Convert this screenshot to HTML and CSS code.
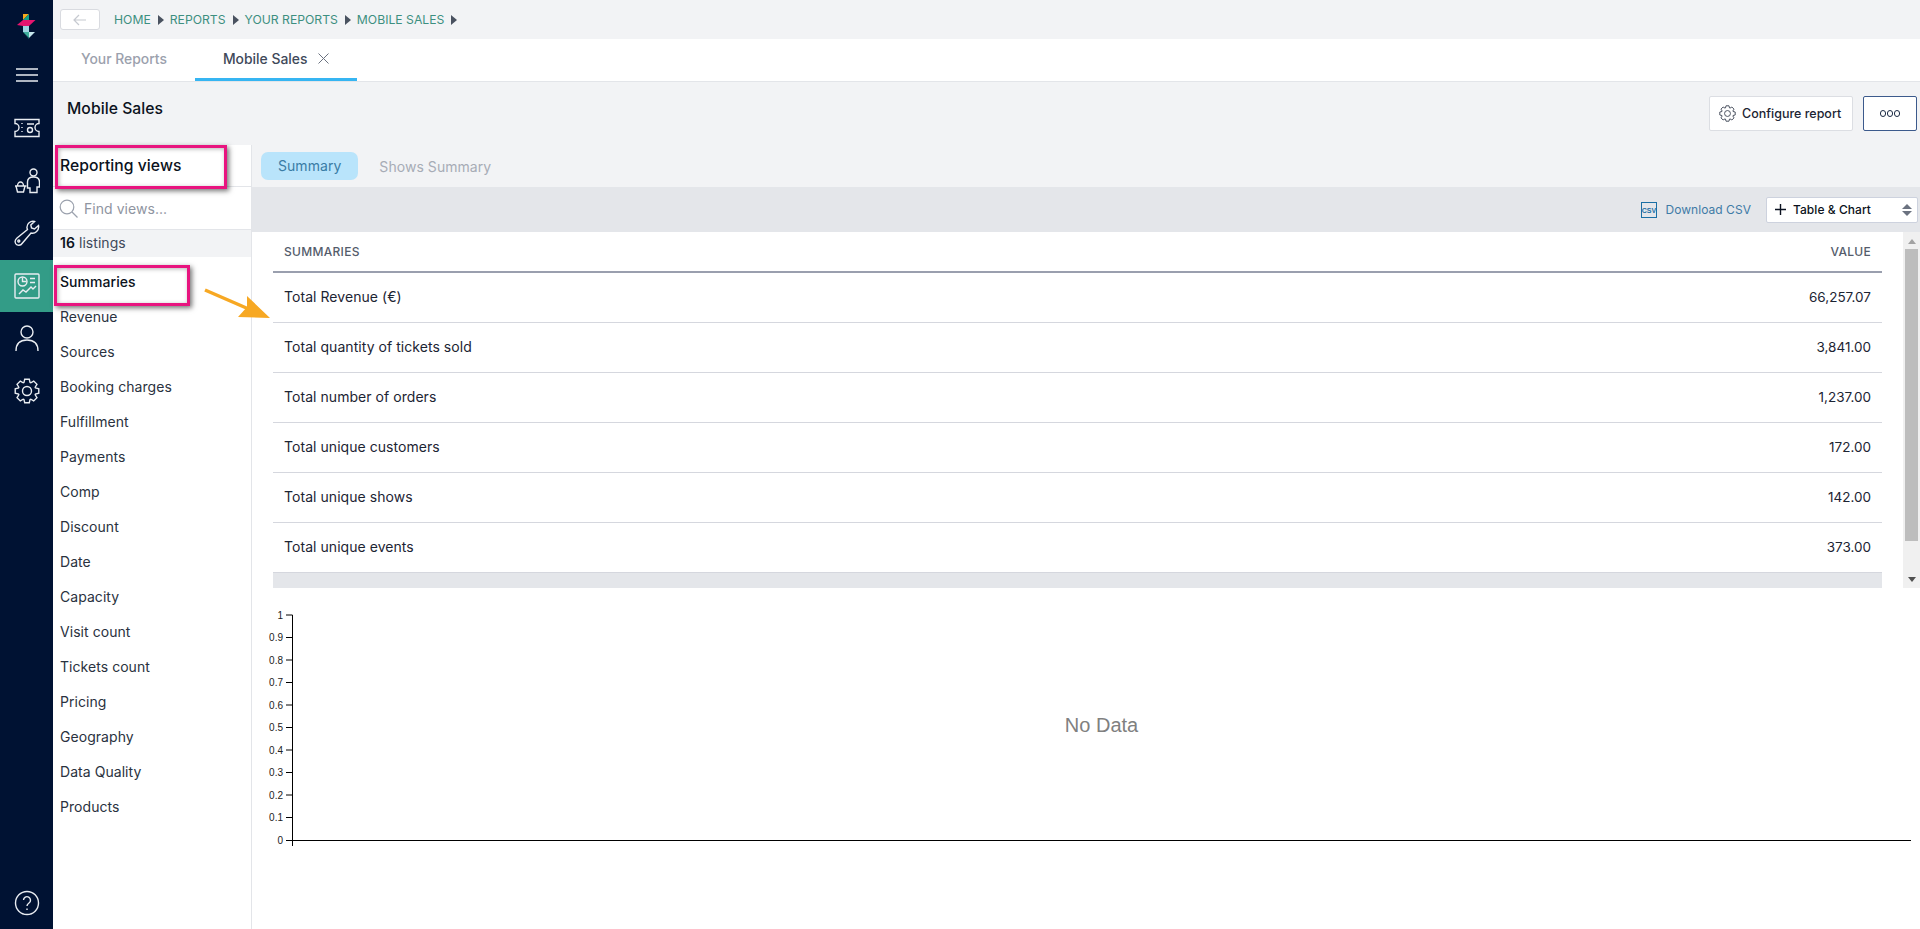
FILE: index.html
```html
<!DOCTYPE html>
<html lang="en">
<head>
<meta charset="utf-8">
<title>Mobile Sales</title>
<link rel="stylesheet" href="styles.css">
</head>
<body>
<div class="app">
  <nav class="rail">
    <div class="rail-logo">
      <svg width="19" height="25" viewBox="0 0 19 25">
        <polygon points="6,0 12,0 6,6" fill="#f7a81b"/><polygon points="12,0 12,6 6,6" fill="#10a08a"/>
        <polygon points="6,6 18.500,6 12,12 6,12" fill="#e6146f"/>
        <polygon points="0,11 6,6 6,12" fill="#e6146f"/>
        <polygon points="6,12 12,12 6,15" fill="#f06a55"/>
        <polygon points="6,12 12,12 12,18 6,18" fill="#9fd4e2"/>
        <polygon points="6,18 12,18 12,24 6,18" fill="#3fae9c"/>
        <polygon points="12,18 18,18 12,24" fill="#c4e6ec"/>
        <polygon points="6,18 12,24 12,25" fill="#1c7f7c"/>
      </svg>
    </div>
    <div class="rail-item">
      <svg width="24" height="16" viewBox="0 0 24 16" class="ic"><path d="M1 2h22M1 8h22M1 14h22"/></svg>
    </div>
    <div class="rail-item">
      <svg width="26" height="20" viewBox="0 0 26 20" class="ic"><path d="M1 1.500h24v4a4 4 0 0 0 0 8v5H1v-5a4 4 0 0 0 0-8z"/><path d="M8 5v1M8 9v1M8 13v1M13 6h7"/><circle cx="16" cy="12" r="2.500"/></svg>
    </div>
    <div class="rail-item">
      <svg width="26" height="26" viewBox="0 0 26 26" class="ic"><circle cx="19.500" cy="4.500" r="3.500"/><path d="M13.500 20v-6c0-3.500 2.500-5 6-5s6 1.500 6 5v5h-2.500v5.500h-7V20z"/><path d="M1 18h11.500M2 18l1.500 6h6l1.500-6"/><path d="M3.500 18a3 4 0 0 1 6 0"/></svg>
    </div>
    <div class="rail-item">
      <svg width="26" height="26" viewBox="0 0 26 26" class="ic"><path d="M24.500 5.500L20.500 9l-3-1-.7-3 3.700-3.500C16.500.5 12.500 3.500 13 8l.5 1.500L3 18c-3 2.500-2 6 0 6.800 2.500 1 4.500-.3 5.500-1.800L17 13c4 1 8.500-2.500 7.500-7.500z"/><circle cx="4.800" cy="21" r="1"/></svg>
    </div>
    <div class="rail-item rail-active">
      <svg width="26" height="26" viewBox="0 0 26 26" class="ic"><rect x="1" y="1" width="24" height="24" rx="1"/><circle cx="8.500" cy="8.500" r="4.500"/><path d="M8.500 4.500v4h4M16 5.500h5M16 9.500h5M5 21l4-4 3 2 5-5 2 2 3-3"/></svg>
    </div>
    <div class="rail-item">
      <svg width="24" height="27" viewBox="0 0 24 27" class="ic"><circle cx="12" cy="7" r="6"/><path d="M1 26c0-8 5-11 11-11s11 3 11 11"/></svg>
    </div>
    <div class="rail-item">
      <svg width="26" height="26" viewBox="0 0 26 26" class="ic"><polygon points="21.46,9.92 24.78,10.71 24.78,15.29 21.46,16.08 21.16,16.8 22.95,19.71 19.71,22.95 16.8,21.16 16.08,21.46 15.29,24.78 10.71,24.78 9.92,21.46 9.2,21.16 6.29,22.95 3.05,19.71 4.84,16.8 4.54,16.08 1.22,15.29 1.22,10.71 4.54,9.92 4.84,9.2 3.05,6.29 6.29,3.05 9.2,4.84 9.92,4.54 10.71,1.22 15.29,1.22 16.08,4.54 16.8,4.84 19.71,3.05 22.95,6.29 21.16,9.2"/><circle cx="13" cy="13" r="4.500"/></svg>
    </div>
    <div class="rail-item rail-help">
      <svg width="26" height="26" viewBox="0 0 26 26" class="ic"><circle cx="13" cy="13" r="11.500"/><path d="M9.500 10a3.500 3.500 0 1 1 5.500 3c-1.300.9-2 1.500-2 3"/><path d="M13 18.500v1.500"/></svg>
    </div>
  </nav>

  <div class="main">
    <header class="crumbs">
      <button class="back" aria-label="Back">
        <svg width="14" height="12" viewBox="0 0 14 12"><path d="M13 6H1M6 1L1 6l5 5"/></svg>
      </button>
      <span class="crumb">HOME</span><i class="tri"></i>
      <span class="crumb">REPORTS</span><i class="tri"></i>
      <span class="crumb">YOUR REPORTS</span><i class="tri"></i>
      <span class="crumb">MOBILE SALES</span><i class="tri"></i>
    </header>

    <div class="tabs">
      <div class="tab">Your Reports</div>
      <div class="tab tab-on">Mobile Sales
        <svg width="11" height="11" viewBox="0 0 11 11" class="tab-x"><path d="M.5.5l10 10M10.500.5l-10 10"/></svg>
      </div>
    </div>

    <div class="titlebar">
      <h1 class="title">Mobile Sales</h1>
      <div class="actions">
        <button class="btn-config">
          <svg width="17" height="17" viewBox="0 0 26 26" class="gear"><polygon points="21.46,9.92 24.78,10.71 24.78,15.29 21.46,16.08 21.16,16.8 22.95,19.71 19.71,22.95 16.8,21.16 16.08,21.46 15.29,24.78 10.71,24.78 9.92,21.46 9.2,21.16 6.29,22.95 3.05,19.71 4.84,16.8 4.54,16.08 1.22,15.29 1.22,10.71 4.54,9.92 4.84,9.2 3.05,6.29 6.29,3.05 9.2,4.84 9.92,4.54 10.71,1.22 15.29,1.22 16.08,4.54 16.8,4.84 19.71,3.05 22.95,6.29 21.16,9.2"/><circle cx="13" cy="13" r="4.500"/></svg>
          Configure report
        </button>
        <button class="btn-more">
          <span class="dot"></span><span class="dot"></span><span class="dot"></span>
        </button>
      </div>
    </div>

    <div class="body">
      <aside class="views">
        <div class="views-head">Reporting views</div>
        <div class="views-search">
          <svg width="19" height="19" viewBox="0 0 19 19"><circle cx="8" cy="8" r="6.800"/><path d="M13 13l5.500 5.500"/></svg>
          <span>Find views...</span>
        </div>
        <div class="views-count"><b>16</b> listings</div>
        <ul class="views-list">
          <li class="on">Summaries</li>
          <li>Revenue</li>
          <li>Sources</li>
          <li>Booking charges</li>
          <li>Fulfillment</li>
          <li>Payments</li>
          <li>Comp</li>
          <li>Discount</li>
          <li>Date</li>
          <li>Capacity</li>
          <li>Visit count</li>
          <li>Tickets count</li>
          <li>Pricing</li>
          <li>Geography</li>
          <li>Data Quality</li>
          <li>Products</li>
        </ul>
      </aside>

      <section class="report">
        <div class="subtabs">
          <span class="pill">Summary</span>
          <span class="pill-off">Shows Summary</span>
        </div>
        <div class="toolbar">
          <a class="csv">
            <svg width="16" height="16" viewBox="0 0 16 16" class="csv-ic"><rect x=".5" y=".5" width="15" height="15"/><text x="8" y="11" text-anchor="middle" class="csv-t">CSV</text></svg>
            Download CSV
          </a>
          <div class="select">
            <svg width="11" height="11" viewBox="0 0 11 11" class="plus"><path d="M5.500 0v11M0 5.500h11"/></svg>
            <span class="select-t">Table &amp; Chart</span>
            <span class="updown"><i class="up"></i><i class="down"></i></span>
          </div>
        </div>

        <div class="tablewrap">
          <div class="tablecol">
            <table class="sum">
              <thead><tr><th>SUMMARIES</th><th class="num">VALUE</th></tr></thead>
              <tbody>
                <tr><td>Total Revenue (€)</td><td class="num">66,257.07</td></tr>
                <tr><td>Total quantity of tickets sold</td><td class="num">3,841.00</td></tr>
                <tr><td>Total number of orders</td><td class="num">1,237.00</td></tr>
                <tr><td>Total unique customers</td><td class="num">172.00</td></tr>
                <tr><td>Total unique shows</td><td class="num">142.00</td></tr>
                <tr><td>Total unique events</td><td class="num">373.00</td></tr>
              </tbody>
            </table>
            <div class="hscroll"></div>
          </div>
          <div class="vscroll">
            <i class="vs-up"></i>
            <div class="vs-thumb"></div>
            <i class="vs-down"></i>
          </div>
        </div>

        <svg class="chart" width="1668" height="258" viewBox="0 0 1668 258">
          <g class="axis">
            <path d="M40.500 25v231M34 25h6.500"/>
            <path d="M34 47.500h6M34 70h6M34 92.500h6M34 115h6M34 137.500h6M34 160h6M34 182.500h6M34 205h6M34 227.500h6"/>
            <path d="M34 250.500h1625"/>
          </g>
          <g class="ticks">
            <text x="31" y="28.500">1</text>
            <text x="31" y="51">0.9</text>
            <text x="31" y="73.500">0.8</text>
            <text x="31" y="96">0.7</text>
            <text x="31" y="118.500">0.6</text>
            <text x="31" y="141">0.5</text>
            <text x="31" y="163.500">0.4</text>
            <text x="31" y="186">0.3</text>
            <text x="31" y="208.500">0.2</text>
            <text x="31" y="231">0.1</text>
            <text x="31" y="253.500">0</text>
          </g>
        </svg>
        <div class="nodata">No Data</div>
      </section>
    </div>
  </div>
</div>

<div class="mark mark-a"></div>
<div class="mark mark-b"></div>
<svg class="arrow" width="70" height="36" viewBox="0 0 70 36"><path d="M2 2L48 22" class="arrow-line"/><polygon points="67,30 35,29 44,19 44,8" class="arrow-head"/></svg>
</body>
</html>
```
FILE: styles.css
```css
* { box-sizing: border-box; }
html, body { margin: 0; height: 100%; overflow: hidden; }
body { font-family: "Inter", "Liberation Sans", sans-serif; color: #1c2433; background: #fff; font-size: 14px; letter-spacing: .05px; position: relative; }
.app { display: flex; height: 929px; }

.rail { width: 53px; flex: none; background: #001233; display: flex; flex-direction: column; }
.rail-logo { height: 49px; display: flex; align-items: flex-start; justify-content: center; padding-top: 14px; }
.rail-item { height: 52.700px; display: flex; align-items: center; justify-content: center; }
.rail-active { background: #339c87; }
.rail-help { margin-top: auto; }
.ic { fill: none; stroke: #e9edf2; stroke-width: 1.400; }

.main { flex: 1; min-width: 0; display: flex; flex-direction: column; background: #f2f3f5; }

.crumbs { height: 39px; flex: none; display: flex; align-items: center; padding-left: 7px; font-size: 12.200px; letter-spacing: 0; }
.back { width: 40px; height: 21px; background: #fff; border: 1px solid #d9dbe0; border-radius: 3px; margin-right: 14px; padding: 0; display: flex; align-items: center; justify-content: center; }
.back svg { fill: none; stroke: #c6c9d0; stroke-width: 1.200; }
.crumb { color: #3d8f80; }
.tri { width: 0; height: 0; border-left: 6px solid #4a5260; border-top: 5px solid transparent; border-bottom: 5px solid transparent; margin: 0 6px 0 7px; }

.tabs { height: 43px; flex: none; background: #fff; border-bottom: 1px solid #e3e5e9; display: flex; letter-spacing: 0; font-size: 13.900px; }
.tab { padding: 0 28px; line-height: 41px; color: #9ba1ad; font-weight: 500; height: 42px; }
.tab-on { color: #40495a; border-bottom: 3px solid #36b5f2; }
.tab-x { margin-left: 7px; fill: none; stroke: #6b7280; stroke-width: 1; }

.titlebar { height: 63px; flex: none; display: flex; justify-content: space-between; padding: 14px 3px 0 14px; }
.title { margin: 2px 0 0; font-size: 15.700px; font-weight: 500; color: #0b1220; line-height: 22px; }
.actions { display: flex; gap: 10px; align-items: flex-start; }
.btn-config { width: 144px; height: 35px; background: #fff; border: 1px solid #dcdee3; border-radius: 2px; display: flex; align-items: center; gap: 6px; padding: 0 0 0 9px; font: 500 12.500px "Inter", sans-serif; color: #1c2433; }
.gear { fill: none; stroke: #4a5260; stroke-width: 1.500; }
.btn-more { width: 54px; height: 35px; background: #fff; border: 1px solid #3c5a8c; border-radius: 2px; display: flex; align-items: center; justify-content: center; gap: .5px; padding: 0; }
.dot { width: 6.500px; height: 6.500px; border: 1.500px solid #1c2b45; border-radius: 50%; }

.body { flex: 1; min-height: 0; display: flex; }
.views { width: 199px; flex: none; background: #fff; border-right: 1px solid #e3e5e9; }
.views-head { height: 42px; border-bottom: 1px solid #e3e5e9; padding: 0 7px; line-height: 41px; font-size: 15.700px; font-weight: 500; color: #0b1220; }
.views-search { height: 42px; display: flex; align-items: center; gap: 6px; padding-left: 6px; color: #8f95a1; }
.views-search svg { fill: none; stroke: #9ba1ad; stroke-width: 1.200; }
.views-count { height: 28px; background: #f2f3f5; border-top: 1px solid #e3e5e9; line-height: 26px; padding-left: 7px; color: #40495a; }
.views-count b { font-weight: 600; color: #0b1220; }
.views-list { list-style: none; margin: 0; padding: 7px 0 0; }
.views-list li { height: 35px; line-height: 35px; padding-left: 7px; color: #2a3240; }
.views-list li.on { color: #0b1220; font-weight: 500; }

.report { flex: 1; min-width: 0; background: #fff; display: flex; flex-direction: column; position: relative; }
.subtabs { height: 42px; flex: none; background: #f2f3f5; display: flex; align-items: center; padding-left: 9px; gap: 21px; }
.pill { background: #b9e4fb; color: #3a7ca5; height: 28px; line-height: 28px; padding: 0 17px; border-radius: 7px; }
.pill-off { color: #a7acb6; }
.toolbar { height: 45px; flex: none; background: #e4e6ea; display: flex; align-items: center; justify-content: flex-end; padding-right: 2px; gap: 15px; }
.csv { display: flex; align-items: center; gap: 8px; color: #3f7ba6; font-size: 12px; }
.csv-ic { fill: none; stroke: #1a6fa5; }
.csv-t { font: 700 7px "Liberation Sans", sans-serif; fill: #1a6fa5; stroke: none; letter-spacing: 0; }
.select { width: 152px; height: 26px; background: #fff; border: 1px solid #cdd2de; border-radius: 2px; display: flex; align-items: center; padding: 0 5px 0 8px; }
.plus { stroke: #0b1220; stroke-width: 1.400; fill: none; margin-right: 7px; }
.select-t { font-size: 12px; font-weight: 500; color: #0b1220; flex: 1; }
.updown { display: flex; flex-direction: column; gap: 2px; }
.up { width: 0; height: 0; border-left: 5px solid transparent; border-right: 5px solid transparent; border-bottom: 5px solid #6b7280; }
.down { width: 0; height: 0; border-left: 5px solid transparent; border-right: 5px solid transparent; border-top: 5px solid #6b7280; }

.tablewrap { height: 356px; flex: none; display: flex; padding-left: 21px; }
.tablecol { width: 1609px; flex: none; display: flex; flex-direction: column; }
.sum { width: 100%; border-collapse: collapse; }
.sum th { height: 40px; text-align: left; font-size: 12px; font-weight: 500; color: #545c6b; padding: 0 11px; border-bottom: 2px solid #9a9fae; letter-spacing: .3px; }
.sum td { height: 50px; padding: 0 11px 1px; border-bottom: 1px solid #d5d7de; color: #1c2433; }
.sum .num { text-align: right; }
.sum td.num { font-size: 13.500px; letter-spacing: 0; }
.hscroll { height: 15px; margin-top: auto; background: #e4e6ea; }
.vscroll { width: 17px; margin-left: 21px; background: #f0f0f0; display: flex; flex-direction: column; align-items: center; padding: 7px 0 6px; }
.vs-up { width: 0; height: 0; border-left: 4px solid transparent; border-right: 4px solid transparent; border-bottom: 5px solid #a3a3a3; }
.vs-thumb { width: 13px; height: 292px; margin-top: 5px; background: #bdbdbd; }
.vs-down { width: 0; height: 0; margin-top: auto; border-left: 4px solid transparent; border-right: 4px solid transparent; border-top: 5px solid #505050; }

.chart { flex: none; margin-top: 2px; }
.axis { fill: none; stroke: #000; stroke-width: 1; }
.ticks { font: 10px "Liberation Sans", sans-serif; fill: #222; text-anchor: end; letter-spacing: 0; }
.nodata { position: absolute; left: 0; right: 0; top: 569px; padding-left: 31px; text-align: center; font: 20px "Liberation Sans", sans-serif; letter-spacing: 0; color: #808080; }

.mark { position: absolute; border: 3px solid #e8147f; box-shadow: 2px 2px 5px rgba(0,0,0,.55), inset 1px 1px 4px rgba(0,0,0,.3); }
.mark-a { left: 55px; top: 145px; width: 172px; height: 44px; }
.mark-b { left: 54px; top: 265px; width: 136px; height: 41px; }
.arrow { position: absolute; left: 203px; top: 288px; }
.arrow-line { fill: none; stroke: #f7a823; stroke-width: 3.500; }
.arrow-head { fill: #f7a823; }
```
